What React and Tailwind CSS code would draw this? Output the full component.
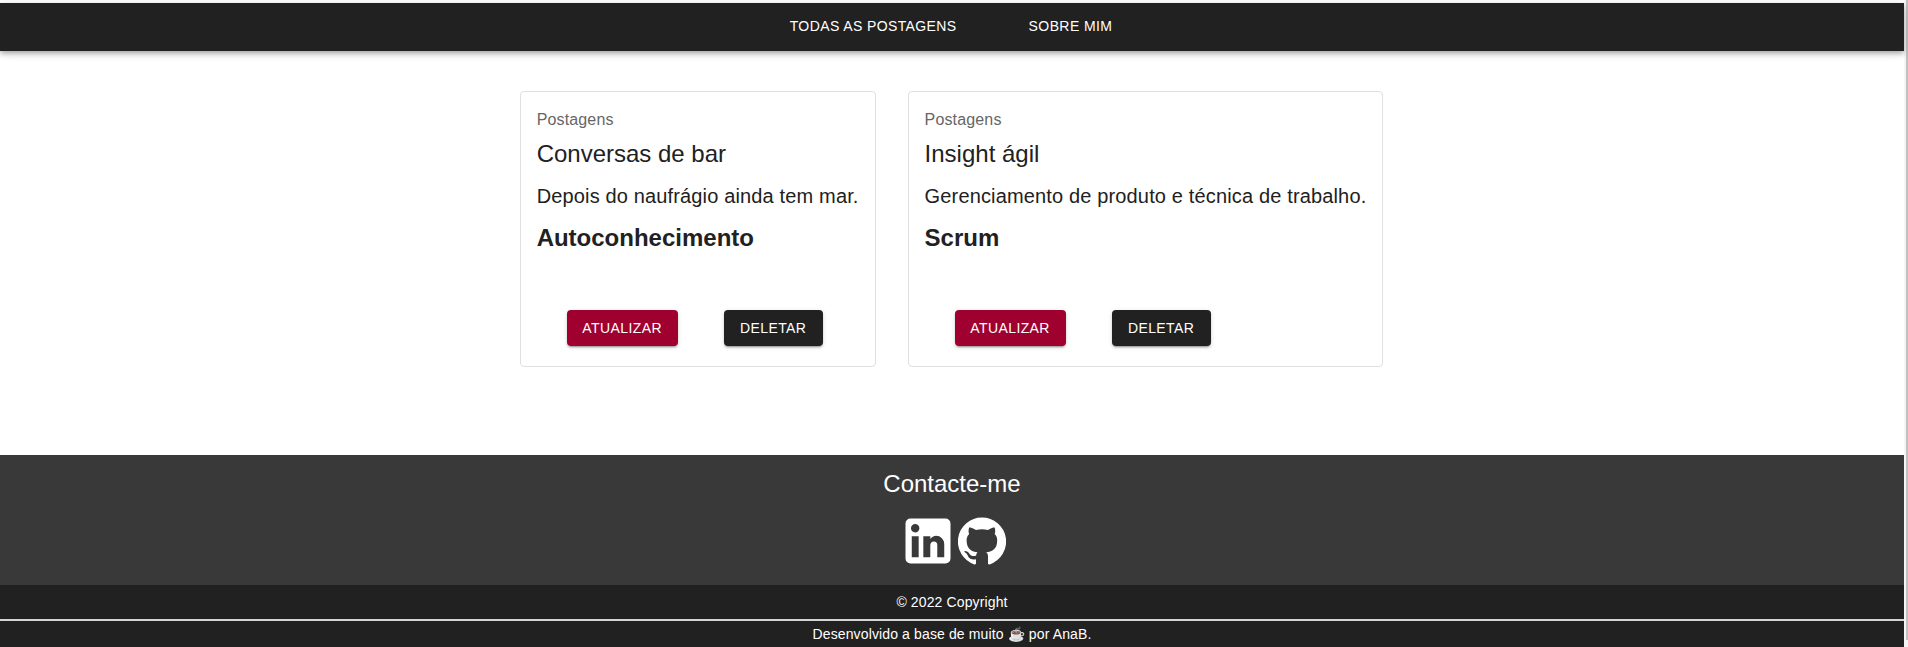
import React from 'react';

const posts = [
  { id: 1, title: 'Conversas de bar', text: 'Depois do naufrágio ainda tem mar.', theme: 'Autoconhecimento' },
  { id: 2, title: 'Insight ágil', text: 'Gerenciamento de produto e técnica de trabalho.', theme: 'Scrum' },
];

const buttonShadow = 'shadow-[0_3px_1px_-2px_rgba(0,0,0,0.2),0_2px_2px_0_rgba(0,0,0,0.14),0_1px_5px_0_rgba(0,0,0,0.12)]';

const LinkedInIcon = () => (
  <svg viewBox="0 0 24 24" className="h-[60px] w-[60px] fill-white">
    <path d="M19 3a2 2 0 0 1 2 2v14a2 2 0 0 1-2 2H5a2 2 0 0 1-2-2V5a2 2 0 0 1 2-2h14m-.5 15.5v-5.3a3.26 3.26 0 0 0-3.26-3.26c-.85 0-1.84.52-2.32 1.3v-1.11h-2.79v8.37h2.79v-4.93c0-.77.62-1.4 1.39-1.4a1.4 1.4 0 0 1 1.4 1.4v4.93h2.79M6.88 8.56a1.68 1.68 0 0 0 1.68-1.68c0-.93-.75-1.69-1.68-1.69a1.69 1.69 0 0 0-1.69 1.69c0 .93.76 1.68 1.69 1.68m1.39 9.94v-8.37H5.5v8.37h2.77z" />
  </svg>
);

const GitHubIcon = () => (
  <svg viewBox="0 0 24 24" className="h-12 w-12 fill-white">
    <path d="M12 .3a12 12 0 0 0-3.8 23.4c.6.1.8-.3.8-.6v-2c-3.3.7-4-1.6-4-1.6-.6-1.4-1.4-1.8-1.4-1.8-1-.7.1-.7.1-.7 1.2 0 1.9 1.2 1.9 1.2 1 1.8 2.8 1.3 3.5 1 0-.8.4-1.3.7-1.6-2.7-.3-5.5-1.3-5.5-6 0-1.2.5-2.3 1.3-3.1-.2-.4-.6-1.6 0-3.2 0 0 1-.3 3.4 1.2a11.5 11.5 0 0 1 6 0c2.3-1.5 3.3-1.2 3.3-1.2.6 1.6.2 2.8 0 3.2.9.8 1.3 1.9 1.3 3.2 0 4.6-2.8 5.6-5.5 5.9.5.4.9 1 .9 2.2v3.3c0 .3.1.7.8.6A12 12 0 0 0 12 .3" />
  </svg>
);

const PostCard = ({ post }) => (
  <div className="rounded border border-[#e0e0e0] bg-white px-4 pt-4 pb-5 text-[#212121]">
    <p className="text-base leading-6 tracking-[0.15px] text-[#666666]">Postagens</p>
    <h5 className="mt-1.5 text-2xl leading-8 whitespace-nowrap">{post.title}</h5>
    <p className="mt-2.5 text-xl leading-8 tracking-[0.15px] whitespace-nowrap">{post.text}</p>
    <p className="mt-2.5 text-2xl leading-8 font-bold whitespace-nowrap">{post.theme}</p>
    <div className="mt-14 ml-[30px] flex gap-[46px]">
      <button className={`h-9 w-[111px] rounded bg-[#a00030] text-sm tracking-[0.4px] text-white uppercase ${buttonShadow}`}>
        Atualizar
      </button>
      <button className={`h-9 w-[99px] rounded bg-[#212121] text-sm tracking-[0.4px] text-white uppercase ${buttonShadow}`}>
        Deletar
      </button>
    </div>
  </div>
);

const App = () => {
  return (
    <div className="flex h-[647px] overflow-hidden bg-white font-['Liberation_Sans',sans-serif] antialiased">
      <div className="flex min-w-0 flex-1 flex-col pt-[3px]">
        {/* Navbar */}
        <nav className="z-10 flex h-12 shrink-0 items-center justify-center gap-[72px] bg-[#212121] pr-[2px] pb-[2px] text-sm tracking-[0.4px] text-white uppercase shadow-[0_2px_4px_-1px_rgba(0,0,0,0.2),0_4px_5px_0_rgba(0,0,0,0.14),0_1px_10px_0_rgba(0,0,0,0.12)]">
          <span>Todas as postagens</span>
          <span>Sobre mim</span>
        </nav>

        {/* Cards */}
        <main className="flex flex-1 items-start justify-center gap-8 pt-10 pr-px">
          {posts.map((post) => (
            <PostCard key={post.id} post={post} />
          ))}
        </main>

        {/* Footer */}
        <footer className="shrink-0 text-white">
          <div className="flex h-[130px] flex-col items-center bg-[#393939]">
            <h5 className="mt-[13px] text-2xl leading-8">Contacte-me</h5>
            <div className="mt-[11px] flex items-center">
              <LinkedInIcon />
              <GitHubIcon />
            </div>
          </div>
          <div className="flex h-[34px] items-center justify-center bg-[#212121] text-sm tracking-[0.13px]">© 2022 Copyright</div>
          <div className="h-0.5 bg-[#d4d4d4]" />
          <div className="flex h-[26px] items-center justify-center bg-[#212121] text-sm tracking-[0.13px]">Desenvolvido a base de muito ☕ por AnaB.</div>
        </footer>
      </div>

      {/* Scrollbar */}
      <div className="flex w-1 shrink-0 justify-end bg-[#f5f5f5]">
        <div className="h-[640px] w-0.5 bg-[#c1c1c1]" />
      </div>
    </div>
  );
};

export default App;
